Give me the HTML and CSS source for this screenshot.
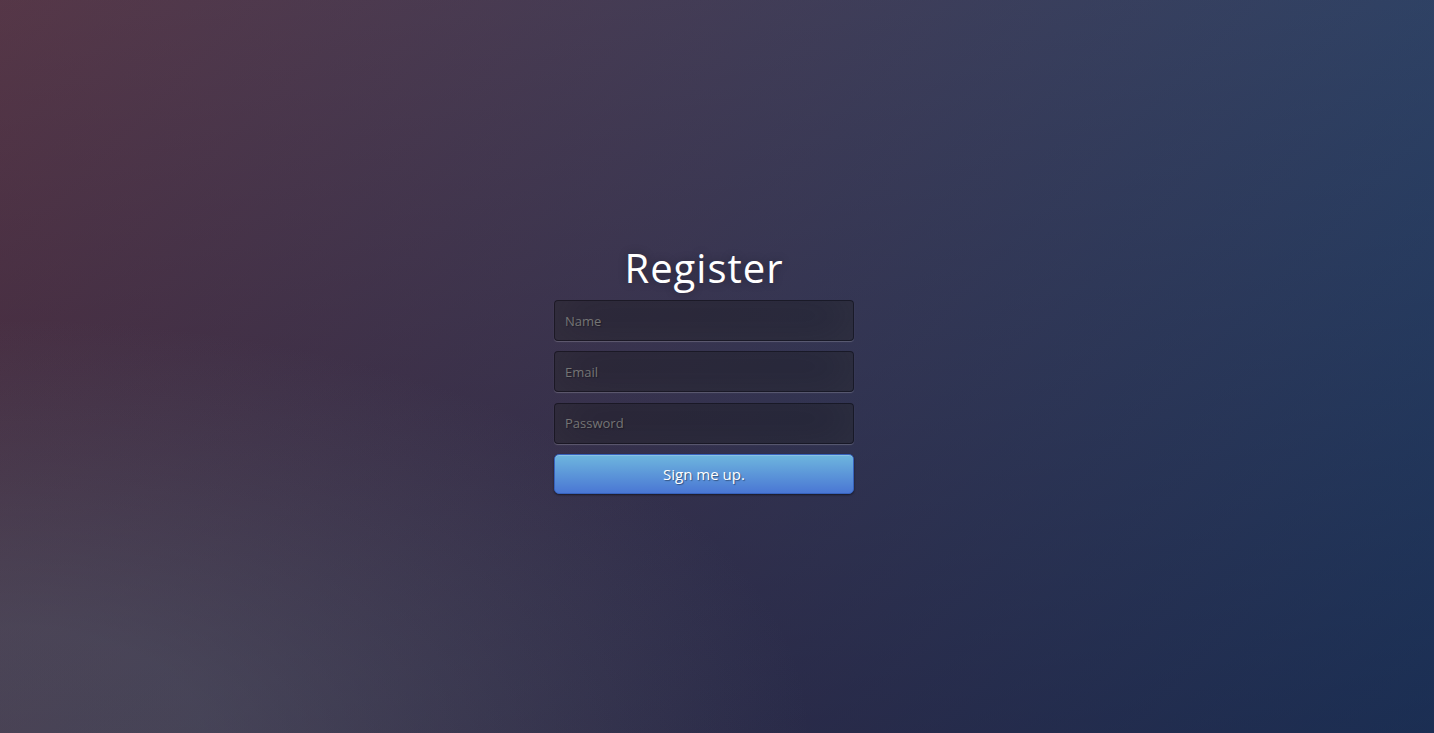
FILE: index.html
```html
<!DOCTYPE html>
<html>
<head>
<meta charset="utf-8">
<link rel="stylesheet" href="styles.css">
</head>
<body>
<div class="login">
  <h1 class="title">Register</h1>
  <form class="form">
    <input class="field" type="text" placeholder="Name">
    <input class="field" type="text" placeholder="Email">
    <input class="field" type="password" placeholder="Password">
    <button class="btn" type="button">Sign me up.</button>
  </form>
</div>
</body>
</html>
```
FILE: styles.css
```css
html { height: 100%; }
* { box-sizing: border-box; }
body {
  margin: 0;
  height: 100%;
  font-family: "Open Sans", "Liberation Sans", sans-serif;
  background-color: #092756;
  background-image:
    radial-gradient(ellipse farthest-corner at 0% 100%, rgba(104,128,138,.32) 10%, rgba(138,114,76,0) 40%),
    linear-gradient(to bottom, rgba(57,173,219,.25) 0%, rgba(42,60,87,.4) 100%),
    linear-gradient(135deg, #670d10 -10%, #092756 110%);
  overflow: hidden;
}
.login {
  width: 300px;
  margin-left: 554px;
  padding-top: 240px;
}
.title {
  margin: 0 0 4px;
  color: #fff;
  font-weight: 400;
  font-size: 40px;
  line-height: 56px;
  letter-spacing: 1px;
  text-align: center;
  text-shadow: 0 0 10px rgba(0,0,0,0.3);
}
.form { display: flex; flex-direction: column; }
.field {
  display: block;
  width: 100%;
  height: 41px;
  margin: 0 0 10.3px;
  padding: 10px;
  font-family: inherit;
  font-size: 13px;
  color: #fff;
  background: rgba(0,0,0,0.3);
  border: 1px solid rgba(0,0,0,0.3);
  border-radius: 4px;
  outline: none;
  text-shadow: 1px 1px 1px rgba(0,0,0,0.3);
  box-shadow: inset 0 -5px 45px rgba(100,100,100,0.2), 0 1px 1px rgba(255,255,255,0.2);
}
.btn {
  display: block;
  width: 100%;
  height: 40px;
  padding: 9px 14px;
  font-family: inherit;
  font-size: 15px;
  color: #fff;
  background-color: #4a77d4;
  background-image: linear-gradient(to bottom, #6eb6de, #4a77d4);
  border: 1px solid #3762bc;
  border-radius: 5px;
  text-shadow: 1px 1px 1px rgba(0,0,0,0.4);
  box-shadow: inset 0 1px 0 rgba(255,255,255,0.2), 0 1px 2px rgba(0,0,0,0.5);
  cursor: pointer;
}
```
